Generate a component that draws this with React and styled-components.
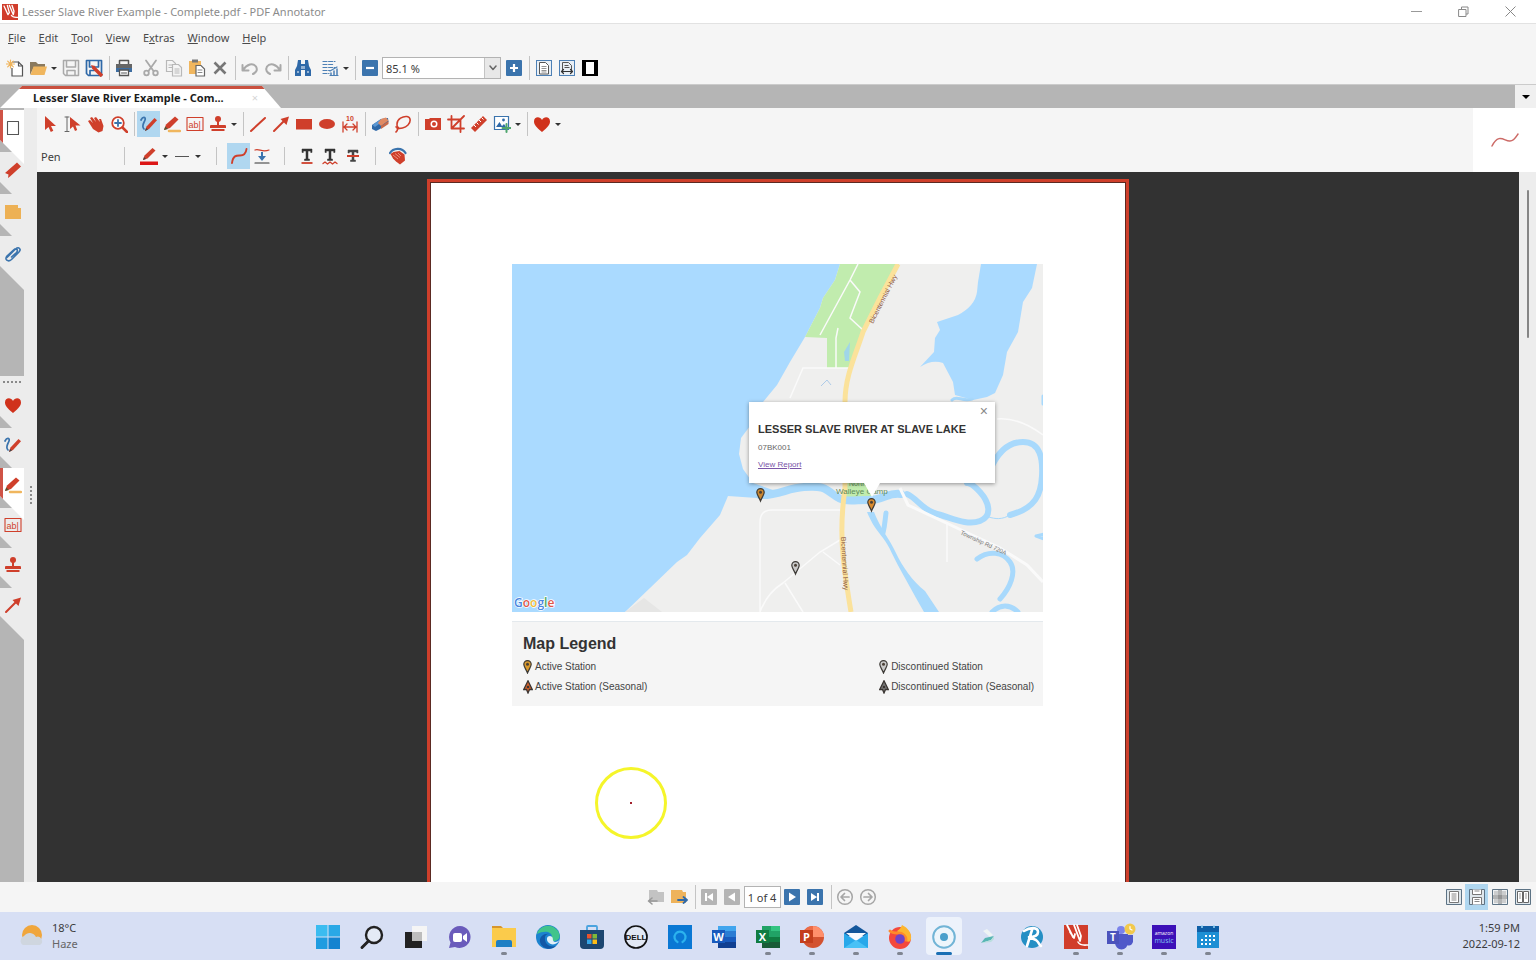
import React, { useState } from 'react';
import styled, { createGlobalStyle, css } from 'styled-components';

const RED = '#cf3f2b';
const BLUE = '#3b74ad';
const GREY = '#a9a9a9';

const GlobalStyle = createGlobalStyle`
  * { box-sizing: border-box; }
  html, body, #root { height: 100%; margin: 0; }
  body {
    overflow: hidden;
    font-family: "Noto Sans", "Open Sans", sans-serif;
    font-size: 11px;
    color: #3c3c3c;
  }
  button, input { font: inherit; color: inherit; }
  svg { display: block; flex: none; }
`;

/* ---------- drawings ---------- */

const stroke = (color, width = 1.5) => ({
    fill: 'none', stroke: color, strokeWidth: width, strokeLinecap: 'round', strokeLinejoin: 'round',
});

const glyphs = {
    newDoc: <><path d="M6 3h6.500l4 4v10h-10.500v-8" fill="#fff" stroke="#555" strokeWidth="1.200" /><path d="M12.500 3v4h4" {...stroke('#555', 1.2)} /><path d="M4.500 1v8M.5 5h8M1.700 2.200l5.600 5.600M7.300 2.200l-5.600 5.600" {...stroke('#efb45c', 1.2)} /></>,
    open: <><path d="M1 16V3h6l2 2h7v3H5z" fill="#8b7a5e" /><path d="M1.500 16l3-8.500H18L15.500 16z" fill="#f0b65e" /></>,
    save: <g {...stroke(GREY)}><path d="M1.500 1.500h15v15h-13l-2-2zM4.500 2v6h9V2M5 16.500v-5h8v5" /></g>,
    saveAs: <><path d="M1.500 1.500h15v15h-13l-2-2zM4.500 2v6h9V2M5 16.500v-5h4" {...stroke('#2f69a8', 1.7)} /><path d="M8 8l9 9" stroke={RED} strokeWidth="3.500" /><path d="M6 6l4 1-2.500 2.500z" fill={RED} /></>,
    print: <><path d="M4.500 5V1.500h9V5" {...stroke('#555')} /><path d="M1 5h16v4H1z" fill="#666" /><path d="M1 9h16v4H1z" fill="#3e6da0" /><path d="M4.500 11h9v5.500h-9z" fill="#fff" stroke="#555" strokeWidth="1.300" /><path d="M6.500 14h5" {...stroke('#555', 1)} /></>,
    cut: <g {...stroke(GREY, 1.8)}><path d="M4 1.500l7.500 10.500M14 1.500L6.500 12" /><circle cx="4.500" cy="14" r="2.300" /><circle cx="13.500" cy="14" r="2.300" /></g>,
    copy: <g fill="#f5f5f5" stroke="#b8b8b8" strokeWidth="1.200"><path d="M1.500 1.500h6l3 3v8h-9zM3.500 6h5M3.500 8.500h4" /><path d="M7.500 5.500h6l3 3v8.500h-9z" /><path d="M9.500 10h5M9.500 12h5M9.500 14h5" /></g>,
    paste: <><path d="M1 2h12v13H1z" fill="#f0b65e" /><path d="M4 .5h6v3H4z" fill="#777" /><path d="M8 6.500h5l3.500 3.500v7H8z" fill="#fff" stroke="#666" strokeWidth="1.200" /><path d="M10 11h4M10 13.500h4" {...stroke('#888', 1)} /></>,
    remove: <path d="M3.500 3.500l11 11M14.500 3.500l-11 11" stroke="#777" strokeWidth="2.600" />,
    undo: <path d="M1.500 6v5.500h6M2 11C6 5 12 3.500 15 7.500c2 3.500 0 6-3 7.500" {...stroke(GREY, 2)} />,
    redo: <path d="M16.500 6v5.500h-6M16 11C12 5 6 3.500 3 7.500c-2 3.500 0 6 3 7.500" {...stroke(GREY, 2)} />,
    find: <><path d="M4 1h3v4h4V1h3l1 6 2 4v6h-6v-6H7v6H1v-6l2-4z" fill="#2f69a8" /><path d="M3 13h2M13 13h2M8 7v3M10 7v3" stroke="#fff" /></>,
    list: <><path d="M2 2.500h12M2 5.500h10M2 8.500h12M2 11.500h7M2 14.500h6" {...stroke('#4d80b5', 1.2)} strokeDasharray="4 1.600" /><path d="M9 16.500h8M9 12l7-4" {...stroke('#4d80b5', 1.2)} /><path d="M16 10v6M13 12v4M10 14v2" {...stroke('#4d80b5', 1.5)} /></>,
    minus: <><rect x="1" y="1" width="16" height="16" rx="1" fill={BLUE} /><path d="M5 9h8" stroke="#fff" strokeWidth="2.200" /></>,
    plus: <><rect x="1" y="1" width="16" height="16" rx="1" fill={BLUE} /><path d="M5 9h8M9 5v8" stroke="#fff" strokeWidth="2.200" /></>,
    fitPage: <><rect x="1.500" y="1.500" width="15" height="15" fill="#e9eff5" stroke="#4d80b5" /><path d="M4.500 3.500h6l3 3v8.500h-9z" fill="#fff" stroke="#555" /><path d="M6.500 7.500h5M6.500 9.500h5M6.500 11.500h5M6.500 13h5" stroke="#777" strokeWidth=".8" /></>,
    fitWidth: <><rect x="1.500" y="1.500" width="15" height="15" fill="#e9eff5" stroke="#4d80b5" /><path d="M4.500 11V3.500h6l3 3V11M6.500 6.500h4M6.500 8.500h5" fill="none" stroke="#555" /><path d="M4 12.500h10M5.500 10.500l-2 2 2 2M12.500 10.500l2 2-2 2" {...stroke('#333', 1.2)} /></>,
    full: <><path d="M1 1h16v16H1z" fill="#000" /><path d="M5 3h8v12H5z" fill="#fff" /></>,
    pointer: <path d="M4 1v14l3.500-3 2.300 5 2.500-1.200L10 11h5z" fill={RED} />,
    textPointer: <><path d="M1 2h4M1 16.500h4M3 2v14.500" {...stroke('#666', 1)} /><path d="M6 2v12l3-2.500 2 4.500 2.200-1L11.500 10.500h5z" fill={RED} /></>,
    hand: <path d="M1 6l2-1 3 3-3-5 2-1 4 5-2-4 2-1 4 5-1-3 2 0 2.500 7-1 5-4 1.500L6 14z" fill={RED} />,
    zoom: <><circle cx="8" cy="8" r="5.800" fill="#fff" stroke={RED} strokeWidth="1.800" /><path d="M12.500 12.500L17 17" {...stroke(RED, 2.5)} /><path d="M5 8h6M8 5v6" {...stroke(BLUE, 1.8)} /></>,
    pen: <><path d="M1 5c2-4 5-3 4 0S1 11 4 14" {...stroke(BLUE, 1.7)} /><path d="M5 16l1.500-4.500L14.500 3 17 5.200 9 14z" fill={RED} /><path d="M5 16l1-3 2 1.500z" fill="#444" /></>,
    marker: <><path d="M6 16h11" {...stroke('#f0b65e', 2.5)} /><path d="M1 15l2-5.500L12 1.500l3.500 3L7 13z" fill={RED} /><path d="M1 15l1.200-3.500L5 14z" fill="#553" /></>,
    textBox: <><path d="M1 2.500h16v13H1z" {...stroke(RED, 1.1)} /><text x="2.500" y="12.500" fontSize="9" fontFamily="Liberation Sans, sans-serif" fill={RED}>ab|</text></>,
    stamp: <><circle cx="9" cy="4" r="3" fill={RED} /><path d="M8 5h2v5h6q1 0 1 1v2H1v-2q0-1 1-1h6zM2.500 14h13v2h-13z" fill={RED} /></>,
    line: <path d="M2 16L16 3" {...stroke(RED, 2)} />,
    arrow: <><path d="M2 16L12 6" {...stroke(RED, 2)} /><path d="M17 1.500L14.500 10 8.500 4z" fill={RED} /></>,
    rect: <path d="M1 4h16v10.500H1z" fill={RED} />,
    ellipse: <ellipse cx="9" cy="9" rx="8" ry="5" fill={RED} />,
    measure: <><path d="M2 7v10M16 7v10M3 12h12M6 9l-3 3 3 3M12 9l3 3-3 3" {...stroke(RED, 1.3)} /><text x="5" y="6" fontSize="7" fontFamily="Liberation Sans, sans-serif" fontWeight="700" fill={RED}>10</text></>,
    eraser: <><path d="M1 10l9-6 7-1 .5 4-8.500 7-4 2L1 14z" fill="#2f69a8" /><path d="M1.500 10L10 4l2 2-8 6z" fill="#5b98d4" /><path d="M10 4l5-1.500 2.500 3L10 11l-3-3z" fill="#e08a63" /><path d="M10 11l7.500-5v3L10 14z" fill="#c96a4a" /></>,
    lasso: <path d="M3 13c3 1 8 0 11-3s3-8-1-8.500S3 4 3 9s2 6-1 8M2 12c2-1 3 1 2 2" {...stroke(RED, 1.6)} />,
    camera: <><path d="M1 4h4l1-1h11v12H1z" fill={RED} /><circle cx="10" cy="9" r="3.500" fill="#fff" /><circle cx="10" cy="9" r="2" fill={RED} /></>,
    crop: <path d="M4.500 1v12.500H17M1 4.500h12.500V17M4.500 13.500L17 1" {...stroke(RED, 1.8)} />,
    ruler: <><path d="M1 13L13 1l4 4L5 17z" fill={RED} /><path d="M4 10l2 2M6.500 7.500l2 2M9 5l2 2M11.500 2.500l2 2" stroke="#fff" /></>,
    image: <><path d="M1.500 1.500h14v13h-14z" fill="#fff" stroke={BLUE} strokeWidth="1.200" /><path d="M3 12l3.500-5 3 5zM8 12l3-3 2 3z" fill="#2f69a8" /><circle cx="10.500" cy="5" r="1.400" fill="#2f69a8" /><path d="M13.500 9v8M9.500 13h8" {...stroke('#4fa66d', 2)} /></>,
    heart: <path d="M9 17C3 12 1 9.500 1 6.500 1 1.500 7 1 9 5c2-4 8-3.500 8 1.500 0 3-2 5.500-8 10.500z" fill="#d0321c" />,
    penColor: <><path d="M3 13l1.500-4.500L12.500 1 15.500 3.500 7.500 11.500z" fill={RED} /><path d="M3 13l1-3 2 2z" fill="#444" /><path d="M0 14.500h18v3.500H0z" fill="#dc1616" /></>,
    thin: <path d="M2 9.500h14" stroke="#555" />,
    curve: <path d="M2 16C3 8 7 8.500 10 8.500s6-2 6.500-6.500" {...stroke(RED, 1.9)} />,
    pressure: <><path d="M2 3c4-2 7 3 14 0" {...stroke(RED, 1.2)} /><path d="M8 5h2v4h3l-4 5-4-5h3z" fill={BLUE} /><path d="M2 16h14" {...stroke('#333', 1.2)} /></>,
    underline: <><path d="M4 2h10v3.500h-1.300V4H10v8h1.500v1.500h-5V12H8V4H5.300v1.500H4z" fill="#333" stroke="#333" strokeWidth=".5" /><path d="M3.500 16h11" stroke={RED} strokeWidth="1.800" /></>,
    squiggle: <><path d="M4 2h10v3.500h-1.300V4H10v8h1.500v1.500h-5V12H8V4H5.300v1.500H4z" fill="#333" stroke="#333" strokeWidth=".5" /><path d="M2 16.500l2-1.500 2.500 2L9 15l2.500 2 2.500-2 2 1.500" {...stroke(RED, 1.3)} /></>,
    strike: <><path d="M4 3h10v3h-1.300V5H10v8h1.500v1.500h-5V13H8V5H5.300v1H4z" fill="#444" stroke="#444" strokeWidth=".5" /><path d="M3 9h12" stroke={RED} strokeWidth="2" /></>,
    touch: <><path d="M1 6C4 1 13 0 16.500 6" {...stroke(BLUE, 2.2)} /><path d="M1.500 7l3-2 6-1 5 3.500.5 6-5 4-4-3-3-3z" fill={RED} /><path d="M4 8l5 4M6 6.500l5 4M9 6l3 3" stroke="#f2a090" strokeWidth=".8" /></>,
    pages: <path d="M3.500 2.500h11v13h-11z" {...stroke('#555', 1.1)} />,
    bookmark: <path d="M1 12L13 1.500l4 4L6 15.500l-2 1.500.5-3.500z" fill={RED} />,
    note: <path d="M1 2h13v3h3v11H1z" fill="#edb155" />,
    clip: <path d="M3 12.500l8.500-8.500c3.500-3 6 .5 3.500 3L7.500 14.500c-3.500 3-7.500 0-4.500-3.500l6.500-6c3-2.500 5 0 3 2.500l-5 4.500" {...stroke(BLUE, 1.6)} />,
    jumpBack: <><path d="M2 2h8l1 2h6v10H2z" fill="#c3c3c3" /><path d="M10 13H2M5 10l-3.500 3L5 16" {...stroke('#999', 1.6)} /></>,
    jumpNext: <><path d="M1 2h11l1 2h3v11H1z" fill="#eeb35b" /><path d="M8 12h8.500M13.500 9l3.500 3-3.500 3" {...stroke('#2f69a8', 1.8)} /></>,
    first: <><rect x="1" y="1" width="16" height="16" rx="1" fill="#b4b4b4" /><path d="M5 5h2v8H5zM13 5v8L7 9z" fill="#fff" /></>,
    prev: <><rect x="1" y="1" width="16" height="16" rx="1" fill="#b4b4b4" /><path d="M12 4.500v9L5 9z" fill="#fff" /></>,
    next: <><rect x="1" y="1" width="16" height="16" rx="1" fill={BLUE} /><path d="M6 4.500v9L13 9z" fill="#fff" /></>,
    last: <><rect x="1" y="1" width="16" height="16" rx="1" fill={BLUE} /><path d="M11 5h2v8h-2zM5 5v8l6-4z" fill="#fff" /></>,
    back: <><circle cx="9" cy="9" r="7.300" {...stroke('#a6a6a6')} /><path d="M13 9H5.500M8.500 5.500L5 9l3.500 3.500" {...stroke('#a6a6a6', 1.7)} /></>,
    forward: <><circle cx="9" cy="9" r="7.300" {...stroke('#a6a6a6')} /><path d="M5 9h7.500M9.500 5.500L13 9l-3.500 3.500" {...stroke('#a6a6a6', 1.7)} /></>,
    viewOne: <><path d="M1.500 1.500h15v15h-15z" fill="#dfe7ec" stroke="#5d7385" /><path d="M4.500 3.500h9v11h-9z" fill="#fff" stroke="#777" /><path d="M6.500 6h5M6.500 8h5M6.500 10h5M6.500 12h5" stroke="#888" /></>,
    viewScroll: <><path d="M1.500 1.500h15v15h-15z" fill="#dfe7ec" stroke="#5d7385" /><path d="M4.500 1.500v5h9v-5M4.500 16.500v-7h9v7" fill="#fff" stroke="#777" /><path d="M6.500 3h5M6.500 11.500h5M6.500 13.500h5" stroke="#888" /></>,
    viewGrid: <><path d="M1.500 1.500h15v15h-15z" fill="#eef1f3" stroke="#5d7385" /><path d="M2 8h14M2 10h14M8 2v14M10 2v14" stroke="#777" /><path d="M3 4h4M11 4h4M3 6h4M11 6h4M3 12h4M11 12h4M3 14h4M11 14h4" stroke="#aaa" /></>,
    viewTwo: <><path d="M1.500 1.500h15v15h-15z" fill="#dfe7ec" stroke="#5d7385" /><path d="M3.500 3.500h5v11h-5zM9.500 3.500h5v11h-5z" fill="#fff" stroke="#666" /><path d="M5 6h2M5 8h2M5 10h2M11 6h2M11 8h2M11 10h2" stroke="#999" /></>,
};

const Icon = ({ name, size = 18 }) => (
    <svg width={size} height={size} viewBox="0 0 18 18" aria-hidden="true">{glyphs[name]}</svg>
);

const Logo = ({ size = 16 }) => (
    <svg width={size} height={size} viewBox="0 0 24 24" aria-hidden="true">
        <path d="M0 0h24v24H0z" fill="#d13d2b" />
        <path d="M3 3l6 13 2-3L8 2M11 2l6 14 1-5-3-9" {...stroke('#fff', 2)} />
        <path d="M14 17c2 4 6 3 10 3" {...stroke('#fff', 1.8)} />
    </svg>
);

const taskIcons = [
    { label: 'Start', art: <><path d="M0 0h11.500v11.500H0z" fill="#3bbcf0" /><path d="M12.500 0H24v11.500H12.500z" fill="#2aa8e6" /><path d="M0 12.500h11.500V24H0z" fill="#1f9ce0" /><path d="M12.500 12.500H24V24H12.500z" fill="#1483d0" /></> },
    { label: 'Search', art: <><circle cx="14" cy="10" r="8" fill="#e4eaf5" stroke="#222" strokeWidth="2.400" /><path d="M8.500 16L2 22.500" {...stroke('#222', 3)} /></> },
    { label: 'Task view', art: <><path d="M8 1h15v15H8z" fill="#f5f5f5" /><path d="M1 7h17v16H1z" fill="#222" /><path d="M8 7h10v9H8z" fill="#bdbdbd" /></> },
    { label: 'Chat', art: <><path d="M12 1a11 11 0 1 1-5 21l-6 1 1.500-5.500A11 11 0 0 1 12 1z" fill="#6a5bbb" /><rect x="5" y="8" width="9" height="9" rx="2" fill="#fff" /><path d="M15 11l4-3v9l-4-3z" fill="#fff" /></> },
    { label: 'File Explorer', run: true, art: <><path d="M0 1h9l3 3H0z" fill="#d7962d" /><path d="M0 3h24v19H0z" fill="#fbcb4b" /><path d="M4 22v-5q0-2 2-2h12q2 0 2 2v5z" fill="#1e7fc4" /></> },
    { label: 'Edge', art: <><circle cx="12" cy="12" r="12" fill="#1c83cf" /><path d="M1 9C3 1 14-2 20 4c5 4 5 11-1 12-4 0-4-2-3-4 0-5-7-7-15-3z" fill="#41c48b" /><path d="M9 12c-1 6 4 11 11 9-5 5-14 3-16-4-1-6 5-9 9-8-3 0-4 2-4 3z" fill="#1258a6" /><path d="M14 11c5 1 1 5 5 6 2 0 4-1 5-3-2 6-9 7-12 3-2-3-1-6 2-6z" fill="#e0eff8" /></> },
    { label: 'Store', art: <><path d="M7 6V2q0-1 1-1h8q1 0 1 1v4" {...stroke('#4aa3df', 1.8)} /><path d="M0 5h24v15q0 4-4 4H4q-4 0-4-4z" fill="#1c4670" /><path d="M7 9h4.500v4.500H7z" fill="#e9532c" /><path d="M12.500 9H17v4.500h-4.500z" fill="#7db83a" /><path d="M7 14.500h4.500V19H7z" fill="#35a5e5" /><path d="M12.500 14.500H17V19h-4.500z" fill="#fbbc16" /></> },
    { label: 'Dell', art: <><circle cx="12" cy="12" r="11" fill="#e2e8f4" stroke="#111" strokeWidth="1.700" /><text x="12" y="15" fontSize="8" fontWeight="700" textAnchor="middle" fontFamily="Liberation Sans, sans-serif" fill="#111">DELL</text></> },
    { label: 'Alexa', art: <><path d="M0 0h24v24H0z" fill="#0a78d4" /><path d="M9.500 17a5.500 5.500 0 1 1 5 0" {...stroke('#2cb3ee', 2.2)} /></> },
    { label: 'Word', art: <><path d="M6 1h18v22H6z" fill="#2b7cd3" /><path d="M6 1h18v5H6z" fill="#41a5ee" /><path d="M6 12h18v11H6z" fill="#185abd" /><path d="M6 17h18v6H6z" fill="#103f91" /><path d="M0 5h13v13H0z" fill="#185abd" /><text x="6.500" y="15.500" fontSize="11" fontWeight="700" textAnchor="middle" fontFamily="Open Sans, sans-serif" fill="#fff">W</text></> },
    { label: 'Excel', run: true, art: <><path d="M6 1h18v22H6z" fill="#21a366" /><path d="M6 12h9v11H6z" fill="#107c41" /><path d="M15 12h9v5h-9z" fill="#107c41" /><path d="M6 17h18v6H6z" fill="#185c37" /><path d="M15 1h9v5h-9z" fill="#33c481" /><path d="M0 5h13v13H0z" fill="#107c41" /><text x="6.500" y="15.500" fontSize="11" fontWeight="700" textAnchor="middle" fontFamily="Open Sans, sans-serif" fill="#fff">X</text></> },
    { label: 'PowerPoint', run: true, art: <><circle cx="13" cy="12" r="11" fill="#d35230" /><path d="M13 1a11 11 0 0 1 11 11H13z" fill="#ff8f6b" /><path d="M13 1a11 11 0 0 0-11 11h11z" fill="#ed6c47" /><path d="M0 5h13v13H0z" fill="#c43e1c" /><text x="6.500" y="15.500" fontSize="11" fontWeight="700" textAnchor="middle" fontFamily="Open Sans, sans-serif" fill="#fff">P</text></> },
    { label: 'Mail', run: true, art: <><path d="M0 8l12-8 12 8v3H0z" fill="#12569b" /><path d="M2 8h20l-10 8z" fill="#f7fbff" /><path d="M0 8l12 8L24 8v15H0z" fill="#28a8ea" /><path d="M0 23l12-8 12 8z" fill="#48c1f6" /></> },
    { label: 'Firefox', run: true, art: <><circle cx="12" cy="13" r="11" fill="#f4483c" /><path d="M14 0c6 3 10 8 9 14-1 4-4 3-6 1 0-6-6-5-8-9 2-1 4-3 5-6z" fill="#fdb62f" /><path d="M2 6c2 2 5 2 8 2 5 0 8 3 8 7" {...stroke('#ff8a2a', 3)} /><circle cx="12" cy="14" r="4.800" fill="#7143c6" /></> },
    { label: 'Recorder', active: true, art: <><circle cx="12" cy="12" r="10.800" fill="#edf5fb" stroke="#71b4d6" strokeWidth="2" /><circle cx="12" cy="12" r="4" fill="#4a9fcb" /></> },
    { label: 'Scanner', art: <><path d="M7 6l4-2 6 6-3 2z" fill="#eef4f4" /><path d="M5 18l4-5 9-2-3 4z" fill="#57b6b3" /><path d="M5 18l10-3 3-4v3l-3 3z" fill="#b9dedd" /></> },
    { label: 'Revit', art: <><circle cx="12" cy="12" r="11" fill="#258fc4" /><path d="M4 6c6-4 14-4 14 1 0 4-5 5-9 5l7 3c3 2 3 5 5 6M12 5L7 21" {...stroke('#fff', 2.6)} /></> },
    { label: 'PDF Annotator', run: true, art: <><path d="M0 0h24v24H0z" fill="#d13d2b" /><path d="M3 0l6 12M10 0l6 16 1-5-4-11M6 7l4 6 1-4" {...stroke('#fff', 1.8)} /><path d="M14 17c2 4 6 3 10 3" {...stroke('#fff', 1.6)} /></> },
    { label: 'Teams', run: true, art: <><circle cx="13" cy="5" r="4" fill="#7b83eb" /><path d="M7 9h13v9a6 6 0 0 1-13 0zM19 10h6v7q-2 5-6 3z" fill="#5059c9" /><path d="M-1 6h12v13H-1z" fill="#4b53bc" /><text x="5" y="16" fontSize="10" fontWeight="700" textAnchor="middle" fontFamily="Open Sans, sans-serif" fill="#fff">T</text><circle cx="22" cy="4" r="5.500" fill="#f2c94d" /><path d="M22 1.500V4l2 1" {...stroke('#fff', 1.2)} /></> },
    { label: 'Amazon Music', run: true, art: <><path d="M0 0h24v24H0z" fill="#3c10b8" /><text x="12" y="10" fontSize="5" textAnchor="middle" fontFamily="Open Sans, sans-serif" fill="#fff">amazon</text><text x="12" y="18" fontSize="7" textAnchor="middle" fontFamily="Open Sans, sans-serif" fill="#7fc3f2">music</text></> },
    { label: 'Calendar', run: true, art: <><path d="M1 1h22v22H1z" fill="#1d8fd4" /><path d="M1 1h22v6H1z" fill="#0f5fa6" /><path d="M9 10h2v2H9zM13 10h2v2h-2zM17 10h2v2h-2zM5 14h2v2H5zM9 14h2v2H9zM13 14h2v2h-2zM17 14h2v2h-2zM5 18h2v2H5zM9 18h2v2H9zM13 18h2v2h-2z" fill="#fff" /><path d="M6 0v3M18 0v3" stroke="#9fd6f5" strokeWidth="1.500" /></> },
];

/* ---------- title, menus, toolbars ---------- */

const Window = styled.div`
  height: 100vh;
  display: flex;
  flex-direction: column;
  background: #f5f5f5;
`;

const TitleBar = styled.header`
  height: 24px;
  flex: none;
  display: flex;
  align-items: center;
  gap: 4px;
  padding: 0 2px;
  background: #fff;
  border-bottom: 1px solid #e2e2e2;
  color: #8b8b8b;
`;

const Title = styled.h1`
  flex: 1;
  margin: 0;
  font-size: 11px;
  font-weight: 400;
`;

const WindowButtons = styled.div`
  display: flex;
`;

const WindowButton = styled.button`
  width: 47px;
  height: 23px;
  padding: 0;
  border: 0;
  background: none;
  display: grid;
  place-items: center;
`;

const MenuBar = styled.nav`
  height: 28px;
  flex: none;
  display: flex;
  align-items: center;
  gap: 13px;
  padding-left: 8px;
`;

const MenuButton = styled.button`
  padding: 0;
  border: 0;
  background: none;
  line-height: 16px;
  color: #4a4a4a;
`;

const Toolbar = styled.div`
  height: 32px;
  flex: none;
  display: flex;
  align-items: center;
  padding-left: ${({ $pad = 3 }) => $pad}px;
`;

const ToolButton = styled.button`
  width: 23px;
  height: 26px;
  flex: none;
  padding: 0;
  border: 0;
  display: grid;
  place-items: center;
  background: ${({ $on }) => ($on ? '#b0d7f0' : 'transparent')};
`;

const CaretButton = styled.button`
  width: 10px;
  height: 24px;
  padding: 0;
  border: 0;
  background: none;
  display: grid;
  place-items: center;

  &::after {
    content: '';
    border: 3px solid transparent;
    border-top-color: #333;
    border-bottom: 0;
  }
`;

const Sep = styled.span`
  width: 1px;
  height: ${({ $wide }) => ($wide ? 18 : 24)}px;
  flex: none;
  margin: ${({ $wide }) => ($wide ? '0 10px 0 11px' : '0 2px 0 4px')};
  background: #c4c4c4;
`;

const Gap = styled.span`
  width: 4px;
  flex: none;
`;

const ZoomBox = styled.div`
  width: 119px;
  height: 22px;
  margin: 0 1px;
  display: flex;
  border: 1px solid #b3b3b3;
  background: #fff;
`;

const ZoomInput = styled.input`
  flex: 1;
  min-width: 0;
  border: 0;
  padding: 0 3px;
  background: none;
`;

const ZoomDrop = styled.button`
  width: 16px;
  padding: 0;
  border: 0;
  border-left: 1px solid #c4c4c4;
  background: #e8e8e8;
  display: grid;
  place-items: center;
`;

const TabStrip = styled.div`
  height: 24px;
  flex: none;
  display: flex;
  justify-content: space-between;
  align-items: flex-end;
  background: #b5b5b5;
  border-top: 1px solid #cbcbcb;
`;

const DocTab = styled.div`
  width: 281px;
  height: 22px;
  padding: 0 23px 2px 33px;
  display: flex;
  align-items: center;
  justify-content: space-between;
  background: #fff;
  border-top: 3px solid #c9503f;
  clip-path: polygon(22px 0, 262px 0, 100% 100%, 0 100%);
  font-weight: 700;
  color: #1c1c1c;
`;

const TabClose = styled.button`
  padding: 0;
  border: 0;
  background: none;
  font-weight: 400;
  color: #d5d5d5;
`;

const TabMenu = styled.button`
  width: 21px;
  height: 23px;
  padding: 0;
  border: 0;
  background: #f0f0f0;
  display: grid;
  place-items: center;

  &::after {
    content: '';
    border: 4px solid transparent;
    border-top-color: #000;
    border-bottom: 0;
  }
`;

/* ---------- body ---------- */

const Body = styled.div`
  flex: 1;
  min-height: 0;
  display: flex;
`;

const Rail = styled.aside`
  width: 37px;
  flex: none;
  display: flex;
  background: #ececec;
`;

const RailTabs = styled.div`
  width: 24px;
  display: flex;
  flex-direction: column;
`;

const RailGroup = styled.div`
  display: flex;
  flex-direction: column;
  background: #b5b5b5;
  ${({ $top }) => ($top ? css`height: 268px; padding-top: 2px;` : css`flex: 1;`)}
`;

const RailTab = styled.button`
  position: relative;
  z-index: ${({ $on }) => ($on ? 2 : 1)};
  width: 24px;
  height: ${({ $tall }) => ($tall ? 54 : 52)}px;
  flex: none;
  margin: 0 0 -12px;
  padding: ${({ $tall }) => ($tall ? 9 : 8)}px 0 0 1px;
  border: 0;
  display: flex;
  justify-content: center;
  align-items: flex-start;
  background: ${({ $on }) => ($on ? '#fff' : '#ececec')};
  box-shadow: inset ${({ $on }) => ($on ? 3 : 0)}px 0 0 #cf5346;
  clip-path: polygon(0 0, 100% 0, 100% 100%, 0 calc(100% - 24px));
`;

const Grip = styled.div`
  height: 12px;
  flex: none;
  display: grid;
  place-items: center;

  &::after {
    content: '';
    width: 18px;
    border-top: 2px dotted #8a8a8a;
  }
`;

const SideGrip = styled.div`
  flex: 1;
  display: flex;
  justify-content: center;
  align-items: center;

  &::after {
    content: '';
    height: 18px;
    border-left: 2px dotted #8a8a8a;
  }
`;

const Workspace = styled.main`
  flex: 1;
  min-width: 0;
  display: flex;
  flex-direction: column;
`;

const ToolArea = styled.div`
  flex: none;
  display: flex;
  justify-content: space-between;
`;

const StrokePreview = styled.div`
  width: 63px;
  display: grid;
  place-items: center;
  background: #fff;
`;

const ToolName = styled.span`
  width: 73px;
  padding-left: 1px;
`;

const StyleGroup = styled.div`
  display: flex;
  align-items: center;
  padding: 0 2px;
`;

const Viewport = styled.div`
  flex: 1;
  min-height: 0;
  display: flex;
`;

const Canvas = styled.div`
  flex: 1;
  min-width: 0;
  padding-top: 7px;
  display: flex;
  justify-content: center;
  overflow: hidden;
  background: #323232;
`;

const ScrollTrack = styled.div`
  width: 17px;
  flex: none;
  padding-top: 18px;
  background: #ededed;
  display: flex;
  justify-content: center;
`;

const ScrollThumb = styled.div`
  width: 2px;
  height: 148px;
  border-radius: 1px;
  background: #858585;
`;

const Page = styled.article`
  position: relative;
  width: 702px;
  height: 904px;
  flex: none;
  padding: 81px 82px 0 81px;
  background: #fff;
  border: 4px solid ${RED};
  outline: 1px solid #5c2a22;
  outline-offset: -4px;
  font-family: "Liberation Sans", Arial, sans-serif;
`;

const MapFrame = styled.figure`
  position: relative;
  margin: 0;
`;

const MapSvg = styled.svg`
  width: 100%;
  height: auto;
`;

const Popup = styled.section`
  position: absolute;
  left: 237px;
  top: 138px;
  width: 246px;
  height: 81px;
  padding: 18px 9px 0;
  background: #fff;
  box-shadow: 0 1px 4px rgba(0, 0, 0, 0.4);
  display: flex;
  flex-direction: column;
  align-items: flex-start;
  font-size: 8px;
  line-height: 17px;
  color: #666;

  h2 {
    margin: 0;
    font-size: 11px;
    line-height: 19px;
    white-space: nowrap;
    color: #333;
  }

  a { color: #7a55a8; }

  &::after {
    content: '';
    position: absolute;
    left: 115px;
    top: 100%;
    border: 8px solid transparent;
    border-top: 14px solid #fff;
    border-bottom: 0;
  }
`;

const PopupClose = styled.button`
  position: absolute;
  top: 3px;
  right: 7px;
  padding: 0;
  border: 0;
  background: none;
  font-size: 14px;
  line-height: 12px;
  color: #888;
`;

const Legend = styled.section`
  height: 85px;
  margin-top: 9px;
  padding: 11px 9px 0 11px;
  background: #f5f5f5;
  border-top: 1px solid #e4e9ed;

  h2 {
    margin: 0 0 4px;
    font-size: 16px;
    line-height: 22px;
    color: #333;
  }
`;

const LegendGrid = styled.div`
  display: grid;
  grid-template-columns: 1fr auto;
  row-gap: 4px;
`;

const LegendItem = styled.div`
  display: flex;
  align-items: center;
  gap: 2px;
  font-size: 10px;
  line-height: 16px;
  color: #444;
`;

const CursorRing = styled.div`
  position: absolute;
  left: 164px;
  top: 584px;
  width: 72px;
  height: 72px;
  border: 3px solid #f5f52a;
  border-radius: 50%;
  display: grid;
  place-items: center;

  &::after {
    content: '';
    width: 2px;
    height: 2px;
    background: #a3202c;
  }
`;

/* ---------- status bar and taskbar ---------- */

const StatusBar = styled.div`
  height: 30px;
  flex: none;
  display: grid;
  grid-template-columns: 1fr auto 1fr;
  align-items: center;
  background: #f5f5f5;
`;

const PageNav = styled.nav`
  grid-column: 2;
  display: flex;
  align-items: center;
  margin-right: 12px;
`;

const PageInput = styled.input`
  width: 37px;
  height: 22px;
  padding: 0;
  border: 1px solid #b3b3b3;
  background: #fff;
  text-align: center;
`;

const ViewModes = styled.div`
  justify-self: end;
  display: flex;
  padding-right: 2px;
`;

const TaskBar = styled.footer`
  height: 48px;
  flex: none;
  display: grid;
  grid-template-columns: 1fr auto 1fr;
  align-items: center;
  background: #d7dff4;
`;

const Weather = styled.div`
  display: flex;
  align-items: center;
  gap: 8px;
  padding-left: 20px;
  line-height: 16px;

  small {
    display: block;
    font-size: 11px;
    color: #666;
  }
`;

const Apps = styled.nav`
  display: flex;
`;

const AppButton = styled.button`
  width: 36px;
  height: 38px;
  margin: 0 4px;
  padding: 8px 0 0;
  border: 0;
  border-radius: 4px;
  display: flex;
  flex-direction: column;
  align-items: center;
  gap: 3px;
  background: ${({ $active }) => ($active ? '#edf2fb' : 'transparent')};

  svg { overflow: visible; }

  &::after {
    content: '';
    width: ${({ $active }) => ($active ? 16 : 6)}px;
    height: 3px;
    border-radius: 2px;
    background: ${({ $active, $run }) => ($active ? '#1a6fb4' : $run ? '#7f8591' : 'transparent')};
  }
`;

const Clock = styled.time`
  padding-right: 16px;
  text-align: right;
  line-height: 16px;
`;

/* ---------- components ---------- */

const menus = [['', 'F', 'ile'], ['', 'E', 'dit'], ['', 'T', 'ool'], ['', 'V', 'iew'], ['E', 'x', 'tras'], ['', 'W', 'indow'], ['', 'H', 'elp']];

const mainTools = ['newDoc', 'open', 'v', 'save', 'saveAs', '|', 'print', '-', 'cut', 'copy', 'paste', 'remove', '|', 'undo', 'redo', '|', 'find', '-', 'list', 'v', '|', 'minus'];
const drawTools = ['pointer', 'textPointer', 'hand', 'zoom', '|', 'pen', 'marker', 'textBox', 'stamp', 'v', '|', 'line', 'arrow', 'rect', 'ellipse', 'measure', '|', 'eraser', 'lasso', '|', 'camera', 'crop', 'ruler', 'image', 'v', '|', 'heart', 'v'];

function Tools({ items, active, onPick }) {
    return items.map((item, index) => {
        if (item === '|') return <Sep key={index} />;
        if (item === '-') return <Gap key={index} />;
        if (item === 'v') return <CaretButton key={index} aria-label="More" />;
        return (
            <ToolButton key={index} aria-label={item} $on={item === active} onClick={() => onPick && onPick(item)}>
                <Icon name={item} />
            </ToolButton>
        );
    });
}

const Pin = ({ fill, x = 0, y = 0 }) => (
    <g transform={`translate(${x} ${y})`}>
        <path d="M4.500 13C3 9 .8 7 .8 4.300a3.700 3.700 0 0 1 7.400 0C8.200 7 6 9 4.500 13z" fill={fill} stroke="#3d3a36" strokeWidth="1.200" />
        <circle cx="4.500" cy="4.300" r="1.500" fill="#4a4036" />
    </g>
);

function LegendPin({ fill, seasonal }) {
    return (
        <svg width="10" height="14" viewBox="0 0 10 14" aria-hidden="true">
            {seasonal
                ? <><path d="M5 .8L9.300 9.500H6.500L5 13 3.500 9.500H.7z" fill={fill} stroke="#3a3532" strokeWidth="1.300" /><circle cx="5" cy="7" r="1.300" fill="#3a3532" /></>
                : <Pin fill={fill} />}
        </svg>
    );
}

const water = { fill: 'none', stroke: '#a8d9fc', strokeLinecap: 'round', strokeLinejoin: 'round' };
const road = { fill: 'none', stroke: '#fafafa', strokeWidth: 1.5 };

function RiverMap() {
    return (
        <MapFrame>
            <MapSvg viewBox="0 0 531 348" role="img" aria-label="Map of Slave Lake">
                <path d="M0 0h531v348H0z" fill="#efefee" />
                <path d="M0 0H328L323 16 311 34 308 44 293 73 278 98 265 121 251 138 241 158 229 174 227 190 231 205 241 219 261 226 261 234H245L216 232 208 251 188 274 175 291 165 298 138 324 113 348H0z" fill="#aadaff" />
                <path d="M113 348L132 334 150 348z" fill="#e6e6e5" />
                <path d="M328 0H387L368 34 351 66 338 104H315V74L293 73 308 44 311 34 323 16z" fill="#c1ecae" />
                <path d="M338 78l-6 10 1 9h4z" fill="#a0d6e8" />
                <path d="M331 219h30v15h-30z" fill="#c1ecae" />
                <path d="M469 0L466 18 465 28Q463 42 446 51L425 58 428 66 423 74 422 88 408 103Q420 95 431 99L441 118 443 131 461 136 475 133 483 129 491 111 495 88 506 68 511 38 520 24 525 0z" fill="#aadaff" />
                <path d="M440 136c5-5 10 2 20-1M531 132v8M524 272l8-2v5z" {...water} strokeWidth="3" />
                <path d="M248 231C266 232 275 224 292 223S312 223 322 231 340 236 356 236 376 228 389 230" {...water} strokeWidth="8" />
                <path d="M395 230C405 234 410 246 425 250S455 262 468 257 477 238 468 228 455 219 455 219" {...water} strokeWidth="6" />
                <path d="M478 206C484 192 494 178 511 178S531 194 530 212 524 244 498 251" {...water} strokeWidth="6" />
                <path d="M498 251c-8 5-15 4-21 2" {...water} strokeWidth="1" />
                <path d="M355 248h7C368 264 378 276 384 289S401 318 413 327L427 348H412L404 334 388 305C381 293 378 283 371 274S360 260 355 248z" fill="#a8d9fc" />
                <path d="M374 249c-1 7-1 12-3 20M465 295c12-9 26-7 33 3s0 26-10 37M480 348c8-8 18-8 26 0" {...water} strokeWidth="5" />
                <path d="M346 0L338 16 308 71M338 16l10 12-10 26 13 12M324 104V74l2-10M338 104H291L278 134M248 348V258q0-12 12-12h68M328 276l-20 12-37 31q-16 10-23 29M273 319l18 29M311 288l17 13M435 258v40M485 155q22-2 46 16" {...road} />
                <path d="M309 122l6-6M315 116l4 5" stroke="#aecbe8" />
                <path d="M386 0L368 34 351 68C344 90 333 112 333 138V224C330 245 329 270 331 291S336 330 339 348" fill="none" stroke="#fbe29b" strokeWidth="5" />
                <path d="M388 224L396 241 445 264 488 284 515 301 531 318" {...road} strokeWidth="3" />
                <g fontFamily="Liberation Sans, sans-serif" fontSize="7">
                    <text transform="translate(361 60) rotate(-63)" fill="#8f5c45">Bicentennial Hwy</text>
                    <text transform="translate(329 273) rotate(87)" fill="#8f5c45">Bicentennial Hwy</text>
                    <text transform="translate(448 270) rotate(25)" fontSize="6" fill="#777">Township Rd 720A</text>
                    <text x="337" y="222" fill="#5d8a58">North</text>
                    <text x="324" y="230" fill="#5d8a58" fontSize="8">Walleye Camp</text>
                </g>
                <Pin fill="#c98732" x={244} y={224} />
                <Pin fill="#d98b2e" x={355} y={234} />
                <Pin fill="#c9c9c9" x={279} y={297} />
                <text x="2" y="343" fontSize="12" fontFamily="Open Sans, sans-serif" fontWeight="600" stroke="#fff" strokeWidth="1.500" paintOrder="stroke">
                    <tspan fill="#4a86e0">G</tspan><tspan fill="#e0574a">o</tspan><tspan fill="#efbb3a">o</tspan><tspan fill="#4a86e0">g</tspan><tspan fill="#4aa860">l</tspan><tspan fill="#e0574a">e</tspan>
                </text>
            </MapSvg>
            <Popup>
                <h2>LESSER SLAVE RIVER AT SLAVE LAKE</h2>
                <span>07BK001</span>
                <a href="#report">View Report</a>
                <PopupClose aria-label="Close">×</PopupClose>
            </Popup>
        </MapFrame>
    );
}

function SideRail() {
    const [panel, setPanel] = useState('pages');
    return (
        <Rail>
            <RailTabs>
                <RailGroup $top>
                    {['pages', 'bookmark', 'note', 'clip'].map((name) => (
                        <RailTab key={name} $tall $on={panel === name} aria-label={name} onClick={() => setPanel(name)}>
                            <Icon name={name} />
                        </RailTab>
                    ))}
                </RailGroup>
                <Grip />
                <RailGroup>
                    {['heart', 'pen', 'marker', 'textBox', 'stamp', 'arrow'].map((name) => (
                        <RailTab key={name} $on={name === 'marker'} aria-label={name}>
                            <Icon name={name} />
                        </RailTab>
                    ))}
                </RailGroup>
            </RailTabs>
            <SideGrip />
        </Rail>
    );
}

function App() {
    const [tool, setTool] = useState('pen');

    return (
        <Window>
            <GlobalStyle />
            <TitleBar>
                <Logo />
                <Title>Lesser Slave River Example - Complete.pdf - PDF Annotator</Title>
                <WindowButtons>
                    <WindowButton aria-label="Minimize"><svg width="11" height="11"><path d="M0 5.500h11" stroke="#999" /></svg></WindowButton>
                    <WindowButton aria-label="Restore"><svg width="11" height="11"><path d="M1 3.500h7v7H1zM3.500 3V1H10v7H8.500" {...stroke('#888', 1)} /></svg></WindowButton>
                    <WindowButton aria-label="Close"><svg width="11" height="11"><path d="M.5.5l10 10M10.500.5l-10 10" stroke="#888" /></svg></WindowButton>
                </WindowButtons>
            </TitleBar>
            <MenuBar>
                {menus.map(([before, key, after]) => (
                    <MenuButton key={key}>{before}<u>{key}</u>{after}</MenuButton>
                ))}
            </MenuBar>
            <Toolbar>
                <Tools items={mainTools} />
                <ZoomBox>
                    <ZoomInput aria-label="Zoom" defaultValue="85.1 %" />
                    <ZoomDrop aria-label="Zoom levels"><svg width="8" height="6"><path d="M1 1l3 3.500L7 1" {...stroke('#666', 1.5)} /></svg></ZoomDrop>
                </ZoomBox>
                <Tools items={['plus', '|', 'fitPage', 'fitWidth', 'full']} />
            </Toolbar>
            <TabStrip>
                <DocTab>Lesser Slave River Example - Com...<TabClose aria-label="Close tab">×</TabClose></DocTab>
                <TabMenu aria-label="Open documents" />
            </TabStrip>

            <Body>
                <SideRail />
                <Workspace>
                    <ToolArea>
                        <div>
                            <Toolbar $pad={1}>
                                <Tools items={drawTools} active={tool} onPick={setTool} />
                            </Toolbar>
                            <Toolbar $pad={3}>
                                <ToolName>Pen</ToolName>
                                <Sep $wide />
                                <StyleGroup><Tools items={['penColor', 'v', 'thin', 'v']} /></StyleGroup>
                                <Sep $wide />
                                <Tools items={['curve', 'pressure']} active="curve" />
                                <Sep $wide />
                                <Tools items={['underline', 'squiggle', 'strike']} />
                                <Sep $wide />
                                <Tools items={['touch']} />
                            </Toolbar>
                        </div>
                        <StrokePreview>
                            <svg width="28" height="14"><path d="M1 13C8-1 14 9 19 8c4 0 6-4 8-7" {...stroke('#cc6a66', 1.5)} /></svg>
                        </StrokePreview>
                    </ToolArea>
                    <Viewport>
                        <Canvas>
                            <Page>
                                <RiverMap />
                                <Legend>
                                    <h2>Map Legend</h2>
                                    <LegendGrid>
                                        <LegendItem><LegendPin fill="#d99a2e" />Active Station</LegendItem>
                                        <LegendItem><LegendPin fill="#c9c9c9" />Discontinued Station</LegendItem>
                                        <LegendItem><LegendPin fill="#d2602a" seasonal />Active Station (Seasonal)</LegendItem>
                                        <LegendItem><LegendPin fill="#777" seasonal />Discontinued Station (Seasonal)</LegendItem>
                                    </LegendGrid>
                                </Legend>
                                <CursorRing />
                            </Page>
                        </Canvas>
                        <ScrollTrack><ScrollThumb /></ScrollTrack>
                    </Viewport>
                </Workspace>
            </Body>

            <StatusBar>
                <PageNav>
                    <Tools items={['jumpBack', 'jumpNext', '|', 'first', 'prev']} />
                    <PageInput aria-label="Page" defaultValue="1 of 4" />
                    <Tools items={['next', 'last', '|', 'back', 'forward']} />
                </PageNav>
                <ViewModes>
                    <Tools items={['viewOne', 'viewScroll', 'viewGrid', 'viewTwo']} active="viewScroll" />
                </ViewModes>
            </StatusBar>
            <TaskBar>
                <Weather>
                    <svg width="24" height="24" viewBox="0 0 24 24"><circle cx="12" cy="11" r="10" fill="#f0a63c" /><path d="M3 21a5 5 0 0 1 1-9 7 7 0 0 1 12 1 4.500 4.500 0 0 1 4 8z" fill="#cfd6df" /></svg>
                    <span>18°C<small>Haze</small></span>
                </Weather>
                <Apps>
                    {taskIcons.map(({ label, art, run, active }) => (
                        <AppButton key={label} aria-label={label} $run={run} $active={active}>
                            <svg width="24" height="24" viewBox="0 0 24 24">{art}</svg>
                        </AppButton>
                    ))}
                </Apps>
                <Clock>1:59 PM<br />2022-09-12</Clock>
            </TaskBar>
        </Window>
    );
}

export default App;
